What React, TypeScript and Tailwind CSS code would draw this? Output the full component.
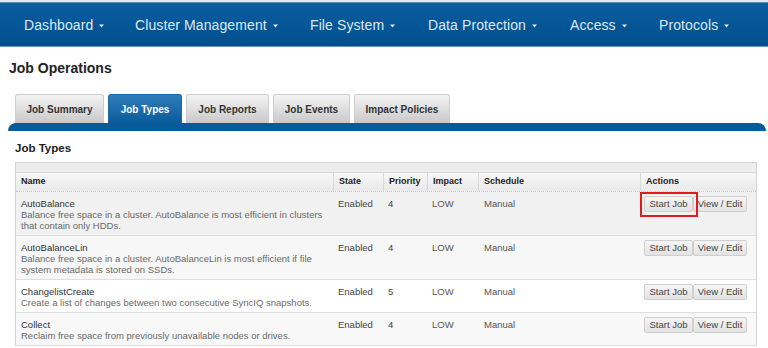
import React from 'react';

// Types
interface JobType {
  name: string;
  lines: string[];
  state: string;
  priority: number;
  impact: string;
  schedule: string;
  rowBg: string;
  highlight?: boolean;
}

// Constants
const NAV_ITEMS = [
  { label: 'Dashboard', width: 'w-[111px]' },
  { label: 'Cluster Management', width: 'w-[175px]' },
  { label: 'File System', width: 'w-[118px]' },
  { label: 'Data Protection', width: 'w-[142px]' },
  { label: 'Access', width: 'w-[89px]' },
  { label: 'Protocols', width: 'w-[100px]' },
];

const TABS = [
  { label: 'Job Summary', width: 'w-[89px]' },
  { label: 'Job Types', width: 'w-[74px]', active: true },
  { label: 'Job Reports', width: 'w-[83px]' },
  { label: 'Job Events', width: 'w-[77px]' },
  { label: 'Impact Policies', width: 'w-[96px]' },
];

const JOB_TYPES: JobType[] = [
  {
    name: 'AutoBalance',
    lines: [
      'Balance free space in a cluster. AutoBalance is most efficient in clusters',
      'that contain only HDDs.',
    ],
    state: 'Enabled',
    priority: 4,
    impact: 'LOW',
    schedule: 'Manual',
    rowBg: 'bg-[#f1f1f1]',
    highlight: true,
  },
  {
    name: 'AutoBalanceLin',
    lines: [
      'Balance free space in a cluster. AutoBalanceLin is most efficient if file',
      'system metadata is stored on SSDs.',
    ],
    state: 'Enabled',
    priority: 4,
    impact: 'LOW',
    schedule: 'Manual',
    rowBg: 'bg-[#f7f7f7]',
  },
  {
    name: 'ChangelistCreate',
    lines: ['Create a list of changes between two consecutive SyncIQ snapshots.'],
    state: 'Enabled',
    priority: 5,
    impact: 'LOW',
    schedule: 'Manual',
    rowBg: 'bg-white',
  },
  {
    name: 'Collect',
    lines: ['Reclaim free space from previously unavailable nodes or drives.'],
    state: 'Enabled',
    priority: 4,
    impact: 'LOW',
    schedule: 'Manual',
    rowBg: 'bg-[#f8f8f8]',
  },
];

const COLUMNS = [
  { label: 'Name', width: 'w-[317px]' },
  { label: 'State', width: 'w-[50px]' },
  { label: 'Priority', width: 'w-[44px]' },
  { label: 'Impact', width: 'w-[51px]' },
  { label: 'Schedule', width: 'w-[162px]' },
  { label: 'Actions', width: 'flex-1' },
];

function Caret({ className }: { className?: string }) {
  return (
    <svg width="5" height="4" viewBox="0 0 5 4" className={className}>
      <path d="M0 0.5 L5 0.5 L2.5 3.5 Z" fill="currentColor" />
    </svg>
  );
}

function SmallButton({ children, width }: { children: React.ReactNode; width: string }) {
  return (
    <span
      className={`${width} h-[16px] flex items-center justify-center rounded-[2px] border border-[#cfcfcf] bg-gradient-to-b from-[#f6f6f6] to-[#e2e2e2] text-[9.5px] text-[#444] leading-none`}
    >
      {children}
    </span>
  );
}

export default function App() {
  return (
    <div className="w-[768px] h-[348px] overflow-hidden bg-white font-['Liberation_Sans',Arial,sans-serif]">
      {/* Top navigation */}
      <div className="h-[2px] bg-[#e3e9ef]" />
      <nav className="h-[45px] flex items-center pl-[24px] pt-[2px] bg-gradient-to-b from-[#0b5e9f] to-[#004f8e] border-t border-[#5d8cb8] border-b border-b-[#6f93b6]">
        {NAV_ITEMS.map((item) => (
          <div key={item.label} className={`${item.width} flex items-center text-[14px] text-[#dfe8f1] tracking-[0.1px]`}>
            <span>{item.label}</span>
            <Caret className="ml-[6px] mt-[1px]" />
          </div>
        ))}
      </nav>

      {/* Page title */}
      <h1 className="mt-[12px] ml-[9px] text-[14px] leading-[18px] font-bold text-[#222]">Job Operations</h1>

      {/* Tabs */}
      <div className="mt-[17px] ml-[15px] flex gap-[4px] h-[29px]">
        {TABS.map((tab) =>
          tab.active ? (
            <div
              key={tab.label}
              className={`${tab.width} flex items-center justify-center rounded-t-[3px] border border-[#1d6aa8] border-b-0 bg-gradient-to-b from-[#2f7cba] to-[#075b9c] text-[10px] font-bold text-white`}
            >
              {tab.label}
            </div>
          ) : (
            <div
              key={tab.label}
              className={`${tab.width} flex items-center justify-center rounded-t-[3px] border border-[#cdcdcd] border-b-0 bg-gradient-to-b from-[#f4f4f4] to-[#c9c9c9] text-[10px] font-bold text-[#333]`}
            >
              {tab.label}
            </div>
          )
        )}
      </div>
      <div className="ml-[8px] mr-[2px] h-[8px] rounded-t-[8px] bg-[#065b9b]" />

      {/* Section heading */}
      <h2 className="mt-[9px] ml-[15px] text-[11.5px] leading-[16px] font-bold text-[#222]">Job Types</h2>

      {/* Table */}
      <div className="relative mt-[6px] ml-[15px] w-[742px] border border-[#d4d4d4] border-b-0">
        <div className="h-[10px] bg-[#ececec] border-b border-[#d8d8d8]" />
        <div className="flex h-[19px] bg-gradient-to-b from-[#f8f8f8] to-[#e9e9e9] border-b border-dotted border-[#c9c9c9]">
          {COLUMNS.map((col, i) => (
            <div
              key={col.label}
              className={`${col.width} flex items-center pl-[5px] text-[9px] font-bold text-[#222] ${i > 0 ? 'border-l border-[#dadada]' : ''}`}
            >
              {col.label}
            </div>
          ))}
        </div>

        {JOB_TYPES.map((job) => (
          <div key={job.name} className={`flex ${job.rowBg} border-b border-[#dedede] text-[9.5px] leading-[11px]`}>
            <div className="w-[317px] pl-[5px] pt-[6px] pb-[4px] whitespace-nowrap">
              <div className="text-[#333]">{job.name}</div>
              {job.lines.map((line) => (
                <div key={line} className="text-[#6a6a6a]">{line}</div>
              ))}
            </div>
            <div className="w-[50px] pl-[5px] pt-[6px] text-[#444]">{job.state}</div>
            <div className="w-[44px] pl-[5px] pt-[6px] text-[#444]">{job.priority}</div>
            <div className="w-[51px] pl-[5px] pt-[6px] text-[#555]">{job.impact}</div>
            <div className="w-[162px] pl-[6px] pt-[6px] text-[#555]">{job.schedule}</div>
            <div className="flex-1 pl-[4px] pt-[4px] flex items-start">
              <div className="relative flex">
                <SmallButton width="w-[49px]">Start Job</SmallButton>
                <SmallButton width="w-[54px]">View / Edit</SmallButton>
                {job.highlight && (
                  <span className="absolute left-[-4px] top-[-4px] w-[58px] h-[25px] border-2 border-[#e3191b]" />
                )}
              </div>
            </div>
          </div>
        ))}
      </div>
    </div>
  );
}
